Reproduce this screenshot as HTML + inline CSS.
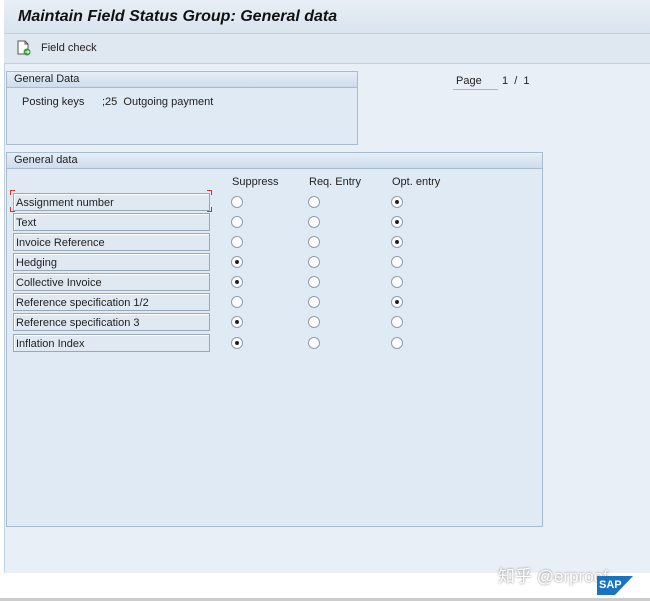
<!DOCTYPE html>
<html><head><style>
body{margin:0;width:650px;height:601px;background:#fff;font-family:"Liberation Sans",Tahoma,sans-serif;font-size:11px;color:#222;position:relative;overflow:hidden}
.a{position:absolute}
.main{left:4px;top:0;width:646px;height:573px;background:#e9eff6;border-left:1px solid #c5d3e0}
.title{left:4px;top:0;width:646px;height:33px;background:linear-gradient(#e8eef5,#d9e4ef);border-bottom:1px solid #c2d0de}
.title span{position:absolute;left:14px;top:8px;font-size:16px;font-weight:bold;font-style:italic;color:#111}
.tb{left:4px;top:34px;width:646px;height:29px;background:#dfe7f0;border-bottom:1px solid #c2d0de}
.box{border:1px solid #a9bccf;background:#dfeaf5}
.hd{position:absolute;left:0;top:0;right:0;height:15px;background:linear-gradient(#e6eef7,#cddcec);border-bottom:1px solid #a9bccf;padding-left:7px;line-height:15px}
.f{position:absolute;left:13px;width:193px;height:16px;border:1px solid #98a8b8;background:#e0e9f2;line-height:18px;padding-left:2px;box-shadow:inset 1px 1px 0 #fff}
.r{position:absolute;width:10px;height:10px;border:1px solid #8f9caa;border-radius:50%;background:#fff}
.r.on::after{content:"";position:absolute;left:3px;top:3px;width:4px;height:4px;border-radius:50%;background:#222}
</style></head><body>
<div class="a main"></div>
<div class="a title"><span>Maintain Field Status Group: General data</span></div>
<div class="a tb">
<svg class="a" style="left:12px;top:6px" width="16" height="16" viewBox="0 0 16 16"><path d="M2 1h7l3 3v10H2z" fill="#fff" stroke="#555"/><path d="M9 1v3h3" fill="none" stroke="#555"/><circle cx="11" cy="12" r="3.5" fill="#3a9a3a"/><path d="M9 12h4M11.5 10.5l1.5 1.5-1.5 1.5" stroke="#fff" fill="none"/></svg>
<span class="a" style="left:37px;top:8px">Field check</span></div>
<div class="a box" style="left:6px;top:71px;width:350px;height:72px"><div class="hd">General Data</div>
<span class="a" style="left:15px;top:24px">Posting keys</span><span class="a" style="left:95px;top:24px">;25&nbsp; Outgoing payment</span></div>
<span class="a" style="left:456px;top:75px">Page</span><div class="a" style="left:453px;top:89px;width:45px;border-top:1px solid #a9b8c8"></div>
<span class="a" style="left:502px;top:75px">1&nbsp; /&nbsp; 1</span>
<div class="a box" style="left:6px;top:152px;width:535px;height:373px"><div class="hd">General data</div></div>
<span class="a" style="left:232px;top:176px">Suppress</span>
<span class="a" style="left:309px;top:176px">Req. Entry</span>
<span class="a" style="left:392px;top:176px">Opt. entry</span>
<div class="f" style="top:193px">Assignment number</div>
<div class="f" style="top:213px">Text</div>
<div class="f" style="top:233px">Invoice Reference</div>
<div class="f" style="top:253px">Hedging</div>
<div class="f" style="top:273px">Collective Invoice</div>
<div class="f" style="top:293px">Reference specification 1/2</div>
<div class="f" style="top:313px">Reference specification 3</div>
<div class="f" style="top:334px">Inflation Index</div>
<div class="a" style="left:10px;top:190px;width:4px;height:4px;border-left:1px solid #c33;border-top:1px solid #c33"></div>
<div class="a" style="left:207px;top:190px;width:4px;height:4px;border-right:1px solid #c33;border-top:1px solid #c33"></div>
<div class="a" style="left:10px;top:207px;width:4px;height:4px;border-left:1px solid #c33;border-bottom:1px solid #c33"></div>
<div class="a" style="left:207px;top:207px;width:4px;height:4px;border-right:1px solid #c33;border-bottom:1px solid #c33"></div>
<div class="r" style="left:231px;top:196px"></div><div class="r" style="left:308px;top:196px"></div><div class="r on" style="left:391px;top:196px"></div>
<div class="r" style="left:231px;top:216px"></div><div class="r" style="left:308px;top:216px"></div><div class="r on" style="left:391px;top:216px"></div>
<div class="r" style="left:231px;top:236px"></div><div class="r" style="left:308px;top:236px"></div><div class="r on" style="left:391px;top:236px"></div>
<div class="r on" style="left:231px;top:256px"></div><div class="r" style="left:308px;top:256px"></div><div class="r" style="left:391px;top:256px"></div>
<div class="r on" style="left:231px;top:276px"></div><div class="r" style="left:308px;top:276px"></div><div class="r" style="left:391px;top:276px"></div>
<div class="r" style="left:231px;top:296px"></div><div class="r" style="left:308px;top:296px"></div><div class="r on" style="left:391px;top:296px"></div>
<div class="r on" style="left:231px;top:316px"></div><div class="r" style="left:308px;top:316px"></div><div class="r" style="left:391px;top:316px"></div>
<div class="r on" style="left:231px;top:337px"></div><div class="r" style="left:308px;top:337px"></div><div class="r" style="left:391px;top:337px"></div>
<span class="a" style="left:498px;top:562px;font-size:17px;color:#fff;text-shadow:0 0 2px #777;font-family:'Liberation Sans','Noto Sans CJK SC',sans-serif">知乎 @erproof</span>
<div class="a" style="left:597px;top:576px;width:36px;height:19px;background:#1a73c0;clip-path:polygon(0 0,100% 0,50% 100%,0 100%);color:#fff;font-weight:bold;font-size:11px;line-height:19px;padding-left:2px;box-sizing:border-box">SAP</div>
<div class="a" style="left:0;top:598px;width:650px;height:3px;background:#ccc"></div>
</body></html>
